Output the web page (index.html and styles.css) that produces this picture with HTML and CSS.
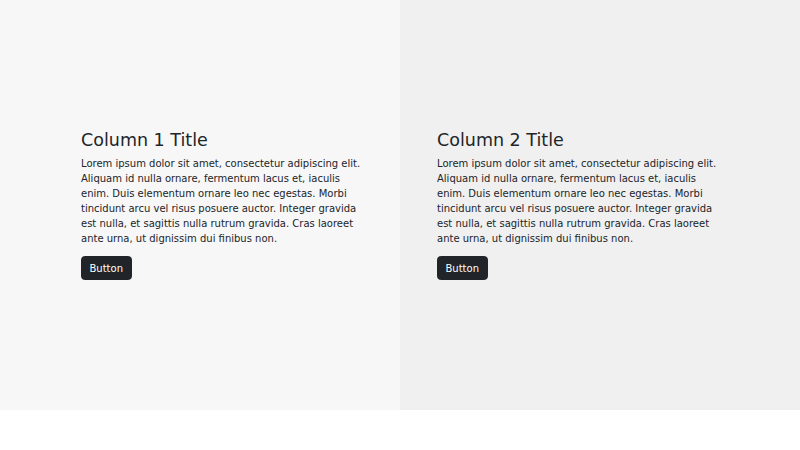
FILE: index.html
```html
<!DOCTYPE html>
<html>
<head>
<meta charset="utf-8">
<link rel="stylesheet" href="styles.css">
</head>
<body>
<div class="row">
  <section class="col col-1">
    <div class="content">
      <h2 class="title">Column 1 Title</h2>
      <p class="text">Lorem ipsum dolor sit amet, consectetur adipiscing elit. Aliquam id nulla ornare, fermentum lacus et, iaculis enim. Duis elementum ornare leo nec egestas. Morbi tincidunt arcu vel risus posuere auctor. Integer gravida est nulla, et sagittis nulla rutrum gravida. Cras laoreet ante urna, ut dignissim dui finibus non.</p>
      <button class="btn">Button</button>
    </div>
  </section>
  <section class="col col-2">
    <div class="content">
      <h2 class="title">Column 2 Title</h2>
      <p class="text">Lorem ipsum dolor sit amet, consectetur adipiscing elit. Aliquam id nulla ornare, fermentum lacus et, iaculis enim. Duis elementum ornare leo nec egestas. Morbi tincidunt arcu vel risus posuere auctor. Integer gravida est nulla, et sagittis nulla rutrum gravida. Cras laoreet ante urna, ut dignissim dui finibus non.</p>
      <button class="btn">Button</button>
    </div>
  </section>
</div>
</body>
</html>
```
FILE: styles.css
```css
html, body {
  margin: 0;
  padding: 0;
  background: #ffffff;
  font-family: "DejaVu Sans", sans-serif;
  color: #212529;
}
.row {
  display: flex;
  height: 410px;
}
.col {
  box-sizing: border-box;
  flex: 0 0 400px;
  width: 400px;
  display: flex;
  align-items: center;
}
.col-1 { background: #f7f7f7; padding-left: 81px; }
.col-2 { background: #f0f0f0; padding-left: 37px; }
.content {
  width: 282px;
}
.title {
  margin: 0 0 5px;
  font-size: 17.5px;
  font-weight: 400;
  line-height: 21px;
}
.text {
  margin: 0 0 10px;
  font-size: 10px;
  line-height: 15px;
}
.btn {
  font-family: "DejaVu Sans", sans-serif;
  font-size: 10px;
  line-height: 15px;
  color: #ffffff;
  background: #212529;
  border: 1px solid #212529;
  border-radius: 3.75px;
  padding: 3.75px 7.5px;
}
```
